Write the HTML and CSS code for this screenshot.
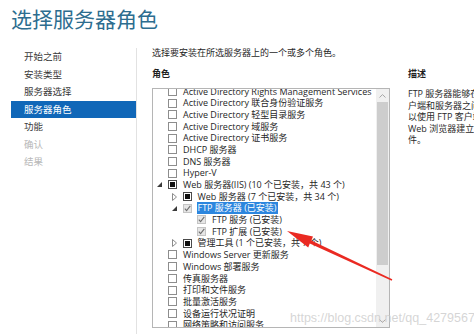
FILE: index.html
```html
<!DOCTYPE html>
<html lang="zh-CN">
<head>
    <meta charset="UTF-8">
    <meta name="viewport" content="width=device-width, initial-scale=1.0">
    <title>选择服务器角色</title>
    <link rel="stylesheet" href="styles.css">
</head>
<body>
    <div class="page">
        <h1 class="title">选择服务器角色</h1>
        <div class="wizard">
            <nav class="steps">
                <div class="step">开始之前</div>
                <div class="step">安装类型</div>
                <div class="step">服务器选择</div>
                <div class="step active">服务器角色</div>
                <div class="step">功能</div>
                <div class="step disabled">确认</div>
                <div class="step disabled">结果</div>
            </nav>
            <main class="content">
                <p class="intro">选择要安装在所选服务器上的一个或多个角色。</p>
                <div class="columns">
                    <section class="roles">
                        <h2 class="label">角色</h2>
                        <div class="listbox">
                            <div class="tree">
                                <div class="rows">
                                    <div class="row lv0"><span class="exp"></span><span class="cb"></span><span class="txt">Active Directory Rights Management Services</span></div>
                                    <div class="row lv0"><span class="exp"></span><span class="cb"></span><span class="txt">Active Directory 联合身份验证服务</span></div>
                                    <div class="row lv0"><span class="exp"></span><span class="cb"></span><span class="txt">Active Directory 轻型目录服务</span></div>
                                    <div class="row lv0"><span class="exp"></span><span class="cb"></span><span class="txt">Active Directory 域服务</span></div>
                                    <div class="row lv0"><span class="exp"></span><span class="cb"></span><span class="txt">Active Directory 证书服务</span></div>
                                    <div class="row lv0"><span class="exp"></span><span class="cb"></span><span class="txt">DHCP 服务器</span></div>
                                    <div class="row lv0"><span class="exp"></span><span class="cb"></span><span class="txt">DNS 服务器</span></div>
                                    <div class="row lv0"><span class="exp"></span><span class="cb"></span><span class="txt">Hyper-V</span></div>
                                    <div class="row lv0">
                                        <span class="exp"><svg width="5" height="5" viewBox="0 0 5 5"><path d="M5 0V5H0Z" fill="#3a3a3a"/></svg></span>
                                        <span class="cb part"></span><span class="txt">Web 服务器(IIS) (10 个已安装，共 43 个)</span>
                                    </div>
                                    <div class="row lv1">
                                        <span class="exp"><svg width="5" height="8" viewBox="0 0 5 8"><path d="M0.5 0.5L4.5 4L0.5 7.5Z" fill="none" stroke="#8c8c8c"/></svg></span>
                                        <span class="cb part"></span><span class="txt">Web 服务器 (7 个已安装，共 34 个)</span>
                                    </div>
                                    <div class="row lv1">
                                        <span class="exp"><svg width="5" height="5" viewBox="0 0 5 5"><path d="M5 0V5H0Z" fill="#3a3a3a"/></svg></span>
                                        <span class="cb done"><svg width="7" height="7" viewBox="0 0 7 7"><path d="M0.8 3.6L2.6 5.6L6.3 0.9" fill="none" stroke="#6e6e6e" stroke-width="1.1"/></svg></span><span class="txt selected">FTP 服务器 (已安装)</span>
                                    </div>
                                    <div class="row lv2"><span class="exp"></span><span class="cb done"><svg width="7" height="7" viewBox="0 0 7 7"><path d="M0.8 3.6L2.6 5.6L6.3 0.9" fill="none" stroke="#6e6e6e" stroke-width="1.1"/></svg></span><span class="txt">FTP 服务 (已安装)</span></div>
                                    <div class="row lv2"><span class="exp"></span><span class="cb done"><svg width="7" height="7" viewBox="0 0 7 7"><path d="M0.8 3.6L2.6 5.6L6.3 0.9" fill="none" stroke="#6e6e6e" stroke-width="1.1"/></svg></span><span class="txt">FTP 扩展 (已安装)</span></div>
                                    <div class="row lv1">
                                        <span class="exp"><svg width="5" height="8" viewBox="0 0 5 8"><path d="M0.5 0.5L4.5 4L0.5 7.5Z" fill="none" stroke="#8c8c8c"/></svg></span>
                                        <span class="cb part"></span><span class="txt">管理工具 (1 个已安装，共 7 个)</span>
                                    </div>
                                    <div class="row lv0"><span class="exp"></span><span class="cb"></span><span class="txt">Windows Server 更新服务</span></div>
                                    <div class="row lv0"><span class="exp"></span><span class="cb"></span><span class="txt">Windows 部署服务</span></div>
                                    <div class="row lv0"><span class="exp"></span><span class="cb"></span><span class="txt">传真服务器</span></div>
                                    <div class="row lv0"><span class="exp"></span><span class="cb"></span><span class="txt">打印和文件服务</span></div>
                                    <div class="row lv0"><span class="exp"></span><span class="cb"></span><span class="txt">批量激活服务</span></div>
                                    <div class="row lv0"><span class="exp"></span><span class="cb"></span><span class="txt">设备运行状况证明</span></div>
                                    <div class="row lv0"><span class="exp"></span><span class="cb"></span><span class="txt">网络策略和访问服务</span></div>
                                </div>
                            </div>
                            <div class="scrollbar">
                                <div class="sb-btn"><svg width="7" height="4" viewBox="0 0 7 4"><path d="M0.5 3.5L3.5 0.6L6.5 3.5" fill="none" stroke="#a6a6a6"/></svg></div>
                                <div class="sb-thumb"></div>
                                <div class="sb-space"></div>
                                <div class="sb-btn"><svg width="7" height="4" viewBox="0 0 7 4"><path d="M0.5 0.5L3.5 3.4L6.5 0.5" fill="none" stroke="#a6a6a6"/></svg></div>
                            </div>
                        </div>
                    </section>
                    <section class="desc">
                        <h2 class="label">描述</h2>
                        <p class="desc-text">FTP 服务器能够在客户端<br>户端和服务器之间传输文件<br>以使用 FTP 客户端或<br>Web 浏览器建立连接传输文<br>件。</p>
                    </section>
                </div>
            </main>
        </div>

        <svg class="arrow" width="474" height="334" viewBox="0 0 474 334">
            <polygon points="287,231 313,236.6 311.4,240.4 392.3,279.3 391.7,280.7 309.8,243.6 308.2,247.4" fill="#ea2a22"/>
        </svg>
        <div class="watermark">https://blog.csdn.net/qq_42795670</div>
    </div>
</body>
</html>
```

FILE: styles.css
```css
:root {
    --text-color: #1f1f1f;
    --nav-active: #1067b8;
    --select-bg: #2c86de;
    --border-color: #b5b5b5;
    --title-color: #2d6d8f;
}

body {
    margin: 0;
    background: #fff;
    font-family: "Open Sans", "Noto Sans CJK SC", sans-serif;
    color: var(--text-color);
    overflow: hidden;
}

.page {
    position: relative;
    width: 474px;
    height: 334px;
    overflow: hidden;
}

.title {
    margin: 0;
    height: 48px;
    box-sizing: border-box;
    padding: 6px 0 0 11px;
    font-family: "Noto Sans CJK SC", sans-serif;
    font-size: 21px;
    font-weight: 400;
    line-height: 24px;
    color: var(--title-color);
}

.wizard {
    display: flex;
    height: 286px;
}

/* 左侧步骤 */
.steps {
    width: 125px;
    margin-left: 11px;
    border-right: 1px solid #e2e2e2;
}

.step {
    height: 17.5px;
    line-height: 17.5px;
    padding-left: 13px;
    font-family: "Noto Sans CJK SC", sans-serif;
    font-size: 9.5px;
    color: #3a3a3a;
}

.step.active {
    background-color: var(--nav-active);
    color: #fff;
}

.step.disabled {
    color: #b8b8b8;
}

.content {
    flex: 1;
    padding-left: 15px;
    min-width: 0;
}

.intro {
    margin: -1px 0 0;
    font-size: 9px;
    line-height: 12px;
}

.columns {
    display: flex;
    gap: 18px;
    margin-top: 9px;
}

.label {
    margin: 0 0 8px;
    font-size: 9px;
    font-weight: 700;
    line-height: 12px;
}

/* 角色列表 */
.roles {
    width: 238px;
    flex-shrink: 0;
}

.listbox {
    display: flex;
    height: 240px;
    box-sizing: border-box;
    border: 1px solid var(--border-color);
}

.tree {
    flex: 1;
    overflow: hidden;
}

.rows {
    margin-top: -3.5px;
}

.row {
    display: flex;
    align-items: center;
    height: 11.7px;
    white-space: nowrap;
    font-size: 9px;
}

.row.lv0 { padding-left: 2px; }
.row.lv1 { padding-left: 16.5px; }
.row.lv2 { padding-left: 31px; }

.exp {
    width: 13px;
    flex-shrink: 0;
    display: flex;
    align-items: center;
    padding-left: 2px;
    box-sizing: border-box;
}

.exp svg {
    display: block;
}

.cb {
    width: 9px;
    height: 9px;
    flex-shrink: 0;
    box-sizing: border-box;
    border: 1px solid #8d8d8d;
    background: #fff;
    margin-right: 5px;
    display: flex;
    align-items: center;
    justify-content: center;
}

.cb.part {
    border-color: #4a4a4a;
}

.cb.part::after {
    content: "";
    width: 5px;
    height: 5px;
    background: #111;
}

.cb.done {
    border-color: #c4c4c4;
    background: #e6e6e6;
}

.txt {
    line-height: 11.7px;
    padding: 0 1px;
}

.txt.selected {
    background: var(--select-bg);
    color: #fff;
}

.scrollbar {
    width: 13px;
    flex-shrink: 0;
    display: flex;
    flex-direction: column;
    background: #f0f0f0;
}

.sb-btn {
    height: 13px;
    display: flex;
    align-items: center;
    justify-content: center;
}

.sb-thumb {
    height: 163px;
    margin: 0 1px;
    background: #cdcdcd;
}

.sb-space {
    flex: 1;
}

/* 描述 */
.desc {
    flex: 1;
    min-width: 0;
}

.desc-text {
    margin: 0;
    font-size: 9px;
    line-height: 11.5px;
    white-space: nowrap;
    color: #2a2a2a;
}

.arrow {
    position: absolute;
    left: 0;
    top: 0;
    pointer-events: none;
}

.watermark {
    position: absolute;
    left: 290px;
    top: 311px;
    font-family: "Liberation Sans", sans-serif;
    font-size: 12.5px;
    color: rgba(200, 200, 200, 0.75);
    white-space: nowrap;
    pointer-events: none;
}
```
